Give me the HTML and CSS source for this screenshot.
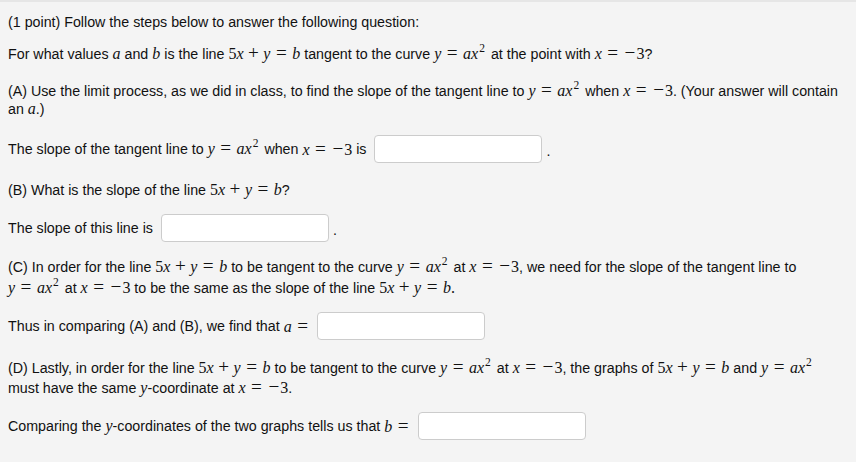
FILE: index.html
```html
<!DOCTYPE html>
<html>
<head>
<meta charset="utf-8">
<link rel="stylesheet" href="styles.css">
</head>
<body>
<div class="page">
  <p class="q first">(1 point) Follow the steps below to answer the following question:</p>

  <p class="q">For what values <span class="m"><i>a</i></span> and <span class="m"><i>b</i></span> is the line <span class="m">5<i>x</i><span class="bin">+</span><i>y</i><span class="rel">=</span><i>b</i></span> tangent to the curve <span class="m"><i>y</i><span class="rel">=</span><i>a</i><i>x</i><sup>2</sup></span> at the point with <span class="m"><i>x</i><span class="rel">=</span><span class="neg">−</span>3</span>?</p>

  <p class="q gap-l">(A) Use the limit process, as we did in class, to find the slope of the tangent line to <span class="m"><i>y</i><span class="rel">=</span><i>a</i><i>x</i><sup>2</sup></span> when <span class="m"><i>x</i><span class="rel">=</span><span class="neg">−</span>3</span>. (Your answer will contain<br>an <span class="m"><i>a</i></span>.)</p>

  <div class="row after-text">The slope of the tangent line to&nbsp;<span class="m"><i>y</i><span class="rel">=</span><i>a</i><i>x</i><sup>2</sup></span>&nbsp;when&nbsp;<span class="m"><i>x</i><span class="rel">=</span><span class="neg">−</span>3</span>&nbsp;is <input class="box" type="text"> <span class="dot">.</span></div>

  <p class="q after-box">(B) What is the slope of the line <span class="m">5<i>x</i><span class="bin">+</span><i>y</i><span class="rel">=</span><i>b</i></span>?</p>

  <div class="row after-text2">The slope of this line is <input class="box" type="text"> <span class="dot">.</span></div>

  <p class="q after-box tall21">(C) In order for the line <span class="m">5<i>x</i><span class="bin">+</span><i>y</i><span class="rel">=</span><i>b</i></span> to be tangent to the curve <span class="m"><i>y</i><span class="rel">=</span><i>a</i><i>x</i><sup>2</sup></span> at <span class="m"><i>x</i><span class="rel">=</span><span class="neg">−</span>3</span>, we need for the slope of the tangent line to<br><span class="m"><i>y</i><span class="rel">=</span><i>a</i><i>x</i><sup>2</sup></span> at <span class="m"><i>x</i><span class="rel">=</span><span class="neg">−</span>3</span> to be the same as the slope of the line <span class="m">5<i>x</i><span class="bin">+</span><i>y</i><span class="rel">=</span><i>b</i>.</span></p>

  <div class="row after-para">Thus in comparing (A) and (B), we find that&nbsp;<span class="m"><i>a</i><span class="rel">=</span></span> <input class="box" type="text"></div>

  <p class="q after-box tall20">(D) Lastly, in order for the line <span class="m">5<i>x</i><span class="bin">+</span><i>y</i><span class="rel">=</span><i>b</i></span> to be tangent to the curve <span class="m"><i>y</i><span class="rel">=</span><i>a</i><i>x</i><sup>2</sup></span> at <span class="m"><i>x</i><span class="rel">=</span><span class="neg">−</span>3</span>, the graphs of <span class="m">5<i>x</i><span class="bin">+</span><i>y</i><span class="rel">=</span><i>b</i></span> and <span class="m"><i>y</i><span class="rel">=</span><i>a</i><i>x</i><sup>2</sup></span><br>must have the same <span class="m"><i>y</i></span>-coordinate at <span class="m"><i>x</i><span class="rel">=</span><span class="neg">−</span>3</span>.</p>

  <div class="row after-para2">Comparing the&nbsp;<span class="m"><i>y</i></span>-coordinates of the two graphs tells us that&nbsp;<span class="m"><i>b</i><span class="rel">=</span></span> <input class="box" type="text"></div>
</div>
</body>
</html>
```

FILE: styles.css
```css
html, body {
  margin: 0;
  padding: 0;
  background: #f4f4f4;
}
body {
  width: 856px;
  height: 462px;
  overflow: hidden;
  border-top: 2px solid #e6e6e6;
  box-sizing: border-box;
}
.page {
  padding: 11px 8px 0 8px;
  font-family: "Liberation Sans", Arial, Helvetica, sans-serif;
  font-size: 14.25px;
  color: #111;
  display: flex;
  flex-direction: column;
}
.q {
  margin: 14px 0 0 0;
  line-height: 18px;
  max-width: 840px;
}
.q.first { margin-top: 0; }
.q.gap-l { margin-top: 19px; }
.q.after-box { margin-top: 18px; }
.q.tall21 { line-height: 21px; margin-top: 15px; }
.q.tall20 { line-height: 20px; margin-top: 18px; }
.row {
  display: flex;
  align-items: center;
  height: 28px;
  white-space: pre;
  line-height: 18px;
}
.row.after-text { margin-top: 17px; }
.row.after-text2 { margin-top: 15px; }
.row.after-para { margin-top: 13px; }
.row.after-para2 { margin-top: 14px; }
.m {
  font-family: "Liberation Serif", "Times New Roman", serif;
  font-size: 16px;
  line-height: 0;
  white-space: nowrap;
}
.m i { font-style: italic; }
.m sup {
  font-size: 11.5px;
  line-height: 0;
  vertical-align: 0;
  position: relative;
  top: -7px;
  margin-left: 1px;
  margin-right: 2px;
}
.bin, .rel, .neg {
  font-size: 1.2em;
  line-height: 0;
}
.bin { padding: 0 4.5px; }
.rel { padding: 0 5.5px; }
.neg { padding: 0 1px; }
.box {
  width: 168px;
  height: 28px;
  box-sizing: border-box;
  border: 1px solid #cccccc;
  border-radius: 4px;
  background: #ffffff;
  margin: 0 0 0 4px;
  padding: 0;
  outline: none;
}
.dot {
  margin-left: 4px;
  position: relative;
  top: 2px;
}
```
